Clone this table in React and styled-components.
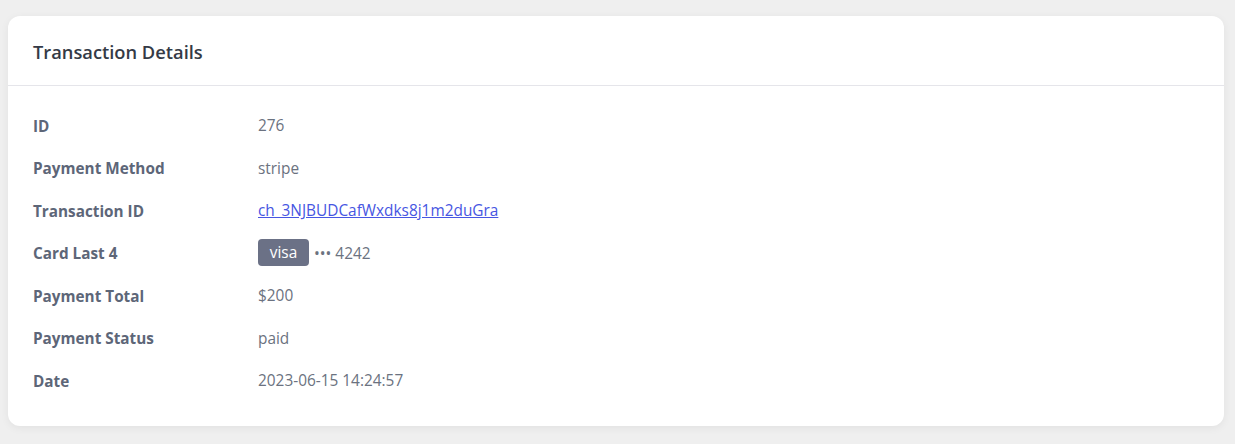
import React from "react";
import styled, { createGlobalStyle } from "styled-components";

const Global = createGlobalStyle`
  html, body { margin: 0; padding: 0; background: #efefef; }
  body { font-family: "Open Sans", "Noto Sans", sans-serif; }
`;

const Page = styled.div`
  padding: 16px 11px 18px 8px;
`;

const Card = styled.section`
  background: #fff;
  border-radius: 12px;
  box-shadow: 0 2px 8px rgba(0, 0, 0, 0.06);
  overflow: hidden;
`;

const Header = styled.header`
  padding: 2px 25px 0;
  height: 67px;
  display: flex;
  align-items: center;
  border-bottom: 1px solid #e5e5ea;
`;

const Title = styled.h2`
  margin: 0;
  font-size: 18.3px;
  font-weight: 600;
  color: #343a46;
`;

const Body = styled.div`
  padding: 18.5px 25px 24px;
  display: grid;
  grid-template-columns: 225px 1fr;
  grid-auto-rows: 42.5px;
  align-items: center;
`;

const Label = styled.div`
  font-size: 15.3px;
  font-weight: 700;
  color: #5d6678;
`;

const Value = styled.div`
  font-size: 15.4px;
  color: #6b7280;
  display: flex;
  align-items: center;
  gap: 5px;
`;

const Link = styled.a`
  color: #4756e2;
  text-decoration: underline;
`;

const Badge = styled.span`
  display: inline-flex;
  align-items: center;
  justify-content: center;
  background: #6b7186;
  color: #fff;
  border-radius: 4px;
  height: 27px;
  width: 51px;
  box-sizing: border-box;
  font-size: 15.4px;
  margin-top: -1px;
`;

const rows = [
  ["ID", "276"],
  ["Payment Method", "stripe"],
  ["Transaction ID", "link"],
  ["Card Last 4", "card"],
  ["Payment Total", "$200"],
  ["Payment Status", "paid"],
  ["Date", "2023-06-15 14:24:57"],
];

export default function App() {
  return (
    <>
      <Global />
      <Page>
        <Card>
          <Header>
            <Title>Transaction Details</Title>
          </Header>
          <Body>
            {rows.map(([label, value]) => (
              <React.Fragment key={label}>
                <Label>{label}</Label>
                <Value>
                  {value === "link" ? (
                    <Link href="#">ch_3NJBUDCafWxdks8j1m2duGra</Link>
                  ) : value === "card" ? (
                    <>
                      <Badge>visa</Badge>
                      <span>••• 4242</span>
                    </>
                  ) : (
                    value
                  )}
                </Value>
              </React.Fragment>
            ))}
          </Body>
        </Card>
      </Page>
    </>
  );
}
